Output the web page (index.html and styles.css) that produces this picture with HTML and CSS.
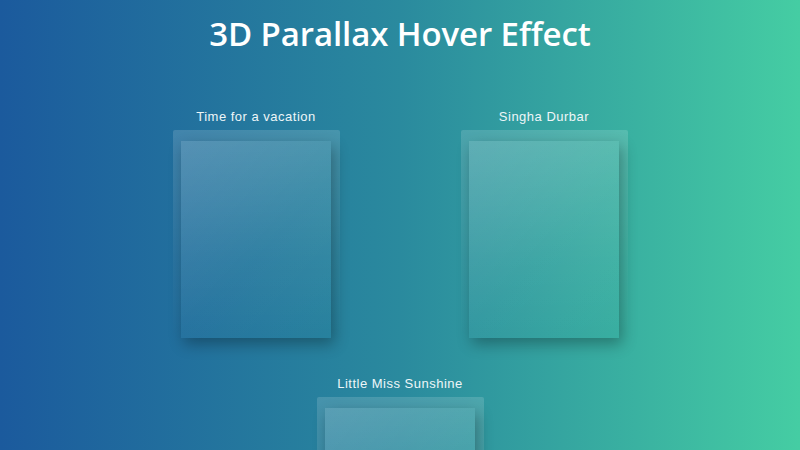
FILE: index.html
```html
<!DOCTYPE html>
<html lang="en">
<head>
  <meta charset="UTF-8" />
  <meta name="viewport" content="width=device-width,initial-scale=1" />
  <title>3D Parallax Hover Effect</title>
  <link rel="stylesheet" href="styles.css">
</head>
<body>

  <h1 class="title">3D Parallax Hover Effect</h1>

  <!-- Cards -->
  <div class="gallery">
    <div class="item">
      <p class="caption">Time for a vacation</p>
      <div class="card"><div class="photo"></div></div>
    </div>
    <div class="item">
      <p class="caption">Singha Durbar</p>
      <div class="card"><div class="photo"></div></div>
    </div>
    <div class="item">
      <p class="caption">Little Miss Sunshine</p>
      <div class="card"><div class="photo"></div></div>
    </div>
  </div>

</body>
</html>
```

FILE: styles.css
```css
html, body { height: 100%; }
body {
  margin: 0;
  overflow: hidden;
  font-family: "Liberation Sans", Arial, sans-serif;
  color: #fff;
  background: linear-gradient(to right, #1b5a9d 0%, #2a8a9e 50%, #45cda3 100%);
}

.title {
  font-family: "Open Sans", sans-serif;
  font-weight: 600;
  font-size: 33px;
  line-height: 44px;
  letter-spacing: -.1px;
  text-align: center;
  margin: 12px 0 0;
}

/* Gallery grid */
.gallery {
  width: 576px;
  margin: 53px auto 0;
  display: flex;
  flex-wrap: wrap;
  justify-content: center;
}
.item {
  width: 288px;
  display: flex;
  flex-direction: column;
  align-items: center;
  margin-bottom: 28px;
}
.caption {
  margin: 0 0 5px;
  font-size: 13px;
  line-height: 16px;
  letter-spacing: .5px;
  color: #eef6f8;
}

/* Card + floating photo layer */
.card {
  width: 167px;
  height: 218px;
  box-sizing: border-box;
  padding: 11px 9px 0 8px;
  background: linear-gradient(to bottom, rgba(255,255,255,.15), rgba(255,255,255,.04) 60%, rgba(255,255,255,0) 95%);
  border-radius: 2px;
}
.photo {
  height: 197px;
  background: linear-gradient(135deg, rgba(255,255,255,.11) 0%, rgba(255,255,255,.02) 55%, rgba(255,255,255,0) 100%);
  box-shadow: 3px 6px 14px rgba(0,0,0,.3);
}
```
